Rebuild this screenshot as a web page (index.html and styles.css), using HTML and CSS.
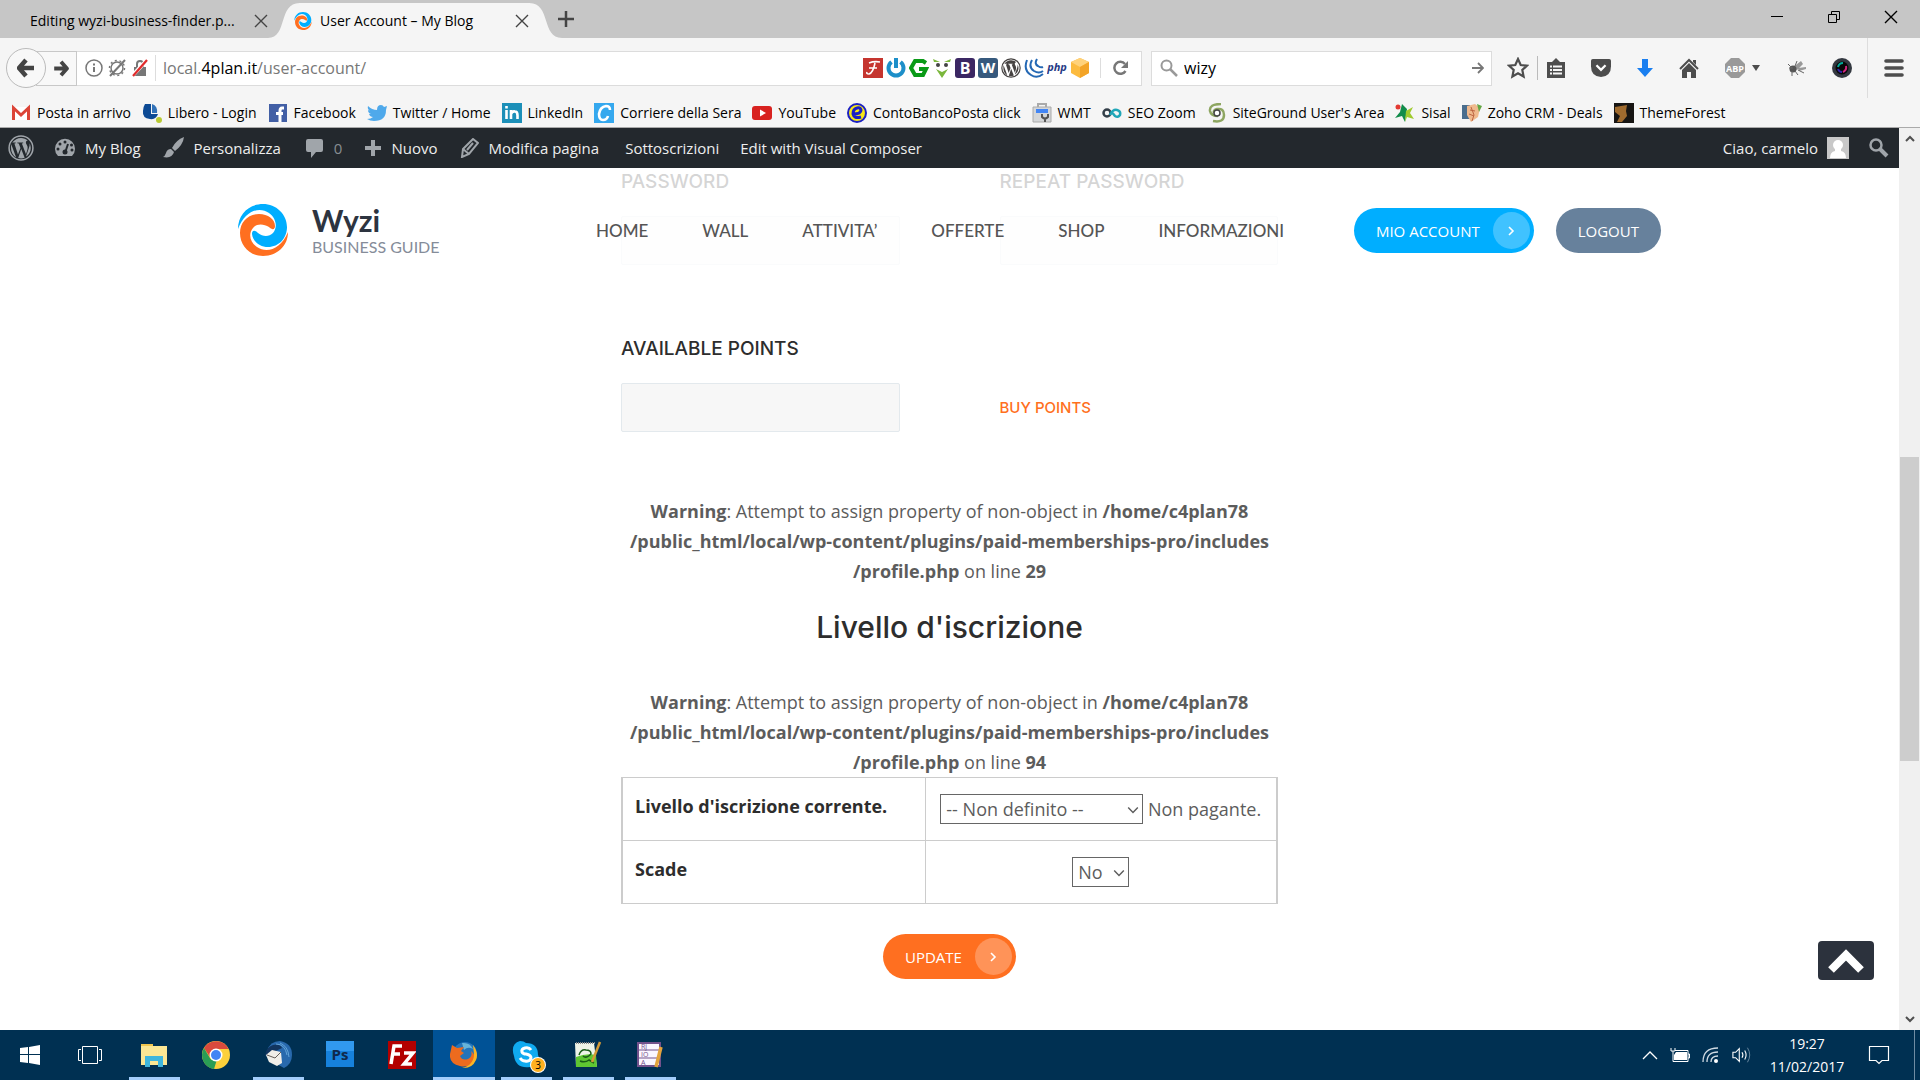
FILE: index.html
```html
<!DOCTYPE html>
<html lang="it">
<head>
    <meta charset="UTF-8">
    <meta name="viewport" content="width=device-width, initial-scale=1.0">
    <title>User Account – My Blog</title>
    <link rel="stylesheet" href="styles.css">
</head>
<body>

    <!-- shared shapes -->
    <svg class="sprites" width="0" height="0" aria-hidden="true">
        <symbol id="swirl" viewBox="0 0 52 52">
            <path fill="#00aeff" d="M1 25C1 10 12 0 26 0c13 0 24 10 24 23 0 11-8 20-19 20-8 0-15-5-16-13 0-4 3-4 6-1 5 4 11 4 15 0 5-6 3-15-4-20C22 2 8 7 1 25z"/>
            <path fill="#ff6f20" d="M51 28c0 14-11 24-25 24C13 52 3 42 3 29c0-11 8-19 19-19 9 0 16 5 16 12 0 4-3 4-6 1-5-3-12-4-16 1-5 6-3 14 4 19 10 7 24 2 31-15z"/>
        </symbol>
        <symbol id="close" viewBox="0 0 14 14"><path d="M1 1l12 12M13 1L1 13" fill="none" stroke="currentColor" stroke-width="1.4"/></symbol>
        <symbol id="chevron" viewBox="0 0 10 10"><path d="M1 3l4 4 4-4" fill="none" stroke="currentColor" stroke-width="1.2"/></symbol>
        <symbol id="arrow" viewBox="0 0 18 20"><path d="M9 2l7 8-7 8M1 10h14" fill="none" stroke="currentColor" stroke-width="4.500" stroke-linejoin="round"/></symbol>
        <symbol id="next" viewBox="0 0 8 10"><path d="M2 1l4 4-4 4" fill="none" stroke="#fff" stroke-width="1.6"/></symbol>
        <symbol id="wp" viewBox="0 0 24 24">
            <circle cx="12" cy="12" r="11" fill="none" stroke="currentColor" stroke-width="1.4"/>
            <path fill="currentColor" d="M3 8.500l4.500 12.300C4.500 19 2.800 15.800 2.800 12c0-1.200.1-2.400.2-3.500zM4 7C6 4.200 8.800 2.700 12 2.700c2.400 0 4.600.9 6.200 2.300-2 .3-2 2.200-.9 4 1.200 2 .9 3.700.3 5.600l-1 3.200L12.800 7.800l1.200-.2V7H8.600v.6l1.300.2 1.600 4.300-2.300 5.800L5.900 7.800l1.200-.2V7zM12.200 13l3.200 8c-2 .8-4.300.8-6 .2zM20 7.500c2 4.600 1 9.500-3.400 12.400l2.700-7.800c.6-1.600.8-3.100.7-4.600z"/>
        </symbol>
    </svg>

    <header class="titlebar">
        <div class="tab">
            <span class="tab-title">Editing wyzi-business-finder.p...</span>
            <button class="plain" aria-label="Chiudi scheda"><svg width="14" height="14"><use href="#close"/></svg></button>
        </div>
        <div class="tab tab-active">
            <svg class="tab-shape" viewBox="0 0 297 35" preserveAspectRatio="none"><path fill="#f5f5f5" d="M0 35C20 35 10 0 32 0H264C286 0 276 35 297 35z"/></svg>
            <svg class="favicon" width="18" height="18"><use href="#swirl"/></svg>
            <span class="tab-title">User Account – My Blog</span>
            <button class="plain" aria-label="Chiudi scheda"><svg width="14" height="14"><use href="#close"/></svg></button>
        </div>
        <button class="plain new-tab" aria-label="Nuova scheda"><svg width="16" height="16" viewBox="0 0 16 16"><path d="M8 0v16M0 8h16" stroke="#444" stroke-width="2.500"/></svg></button>
        <div class="window-controls">
            <button class="plain" aria-label="Riduci"><svg width="14" height="14" viewBox="0 0 14 14"><path d="M1 6.500h12" stroke="#000"/></svg></button>
            <button class="plain" aria-label="Ripristina"><svg width="14" height="14" viewBox="0 0 14 14"><path d="M1.500 4.500h8v8h-8zM4.500 4V1.500h8v8H10" fill="none" stroke="#000"/></svg></button>
            <button class="plain" aria-label="Chiudi"><svg width="14" height="14"><use href="#close"/></svg></button>
        </div>
    </header>

    <div class="navbar">
        <div class="history">
            <button class="plain back" aria-label="Indietro"><svg class="flip" width="18" height="20"><use href="#arrow"/></svg></button>
            <button class="plain forward" aria-label="Avanti"><svg width="16" height="17"><use href="#arrow"/></svg></button>
        </div>
        <div class="urlbar">
            <div class="identity">
                <svg width="18" height="18" viewBox="0 0 18 18"><circle cx="9" cy="9" r="8" fill="none" stroke="#777" stroke-width="1.500"/><path d="M9 8v5M9 4.500v2" stroke="#777" stroke-width="2"/></svg>
                <svg width="18" height="18" viewBox="0 0 18 18"><circle cx="9" cy="9" r="6" fill="none" stroke="#777" stroke-width="1.500"/><circle cx="9" cy="9" r="7.500" fill="none" stroke="#777" stroke-width="1.500" stroke-dasharray="2 2.700"/><path d="M2 17L17 1" stroke="#777" stroke-width="2"/></svg>
                <svg width="18" height="18" viewBox="0 0 18 18"><path fill="#777" d="M3 8h12v9H3z"/><path d="M6 8V5q0-3 3-3t3 3v3" fill="none" stroke="#777" stroke-width="2"/><path d="M2 16L16 1" stroke="#fff" stroke-width="4"/><path d="M2 17L16 1" stroke="#e02c2c" stroke-width="2.200"/></svg>
            </div>
            <p class="url">local.<b>4plan.it</b>/user-account/</p>
            <div class="detected">
                <svg width="20" height="20" viewBox="0 0 20 20"><path fill="#c5352f" d="M0 0h20v20H0z"/><path d="M6 5q5-2 11-1M12 5Q10 15 6 16q-3 0-2-2M6 10h8" fill="none" stroke="#fff" stroke-width="1.600"/></svg>
                <svg width="20" height="20" viewBox="0 0 20 20"><path d="M5.500 4A7.500 7.500 0 1 0 14.500 4M10 0v10" fill="none" stroke="#1d8fc9" stroke-width="4"/></svg>
                <svg width="20" height="20" viewBox="0 0 20 20"><path d="M17 5l-3-2H6L2 10l4 7h8l3-6h-7" fill="none" stroke="#0a9a17" stroke-width="4"/></svg>
                <svg width="20" height="20" viewBox="0 0 20 20"><path fill="#7bb73c" d="M1 1l7 3H2zM19 1l-7 3h6zM4 11l6 3 6-3-6 9z"/><circle cx="6" cy="7" r="2" fill="#444"/><circle cx="14" cy="7" r="2" fill="#444"/></svg>
                <svg width="20" height="20" viewBox="0 0 20 20"><rect width="20" height="20" rx="3" fill="#3b2763"/><text x="10" y="16" text-anchor="middle" font-size="16" font-weight="700" fill="#fff">B</text></svg>
                <svg width="20" height="20" viewBox="0 0 20 20"><rect width="20" height="20" rx="3" fill="#36597d"/><text x="10" y="15" text-anchor="middle" font-size="15" font-weight="700" fill="#fff">W</text></svg>
                <svg class="wp-dark" width="20" height="20"><use href="#wp"/></svg>
                <svg width="20" height="20" viewBox="0 0 20 20"><path d="M3 2Q-1 12 7 17q6 4 12-1M8 2q-4 7 2 11 5 3 9 0M13 1q-3 5 1 7 3 2 5 1" fill="none" stroke="#2468b4" stroke-width="2"/></svg>
                <svg width="20" height="20" viewBox="0 0 20 20"><text x="10" y="13" text-anchor="middle" font-size="11" font-weight="700" font-style="italic" fill="#283a85">php</text></svg>
                <svg width="20" height="20" viewBox="0 0 20 20"><path fill="#fcbb3f" d="M10 0l9 4v11l-9 5-9-5V4z"/><path fill="#ffd27a" d="M10 0l9 4-9 5-9-5z"/><path fill="#f3a427" d="M10 9l9-5v11l-9 5z"/></svg>
            </div>
            <button class="plain reload" aria-label="Ricarica"><svg width="16" height="16" viewBox="0 0 16 16"><path d="M12.500 11A6 6 0 1 1 12 4" fill="none" stroke="#777" stroke-width="2.500"/><path fill="#777" d="M15 1v7H8z"/></svg></button>
        </div>
        <label class="searchbox">
            <svg width="18" height="18" viewBox="0 0 18 18"><circle cx="6.500" cy="6.500" r="5" fill="none" stroke="#999" stroke-width="2"/><path d="M10 10l7 7" stroke="#999" stroke-width="2.500"/></svg>
            <input type="text" value="wizy" aria-label="Cerca">
            <svg width="12" height="12" viewBox="0 0 12 12"><path d="M0 6h11M6 1l5 5-5 5" fill="none" stroke="#777" stroke-width="1.800"/></svg>
        </label>
        <div class="tools">
            <svg width="22" height="22" viewBox="0 0 22 22"><path d="M11 2l2.700 6 6.300.7-4.700 4.300 1.300 6.500L11 16.200l-5.600 3.300L6.700 13 2 8.700 8.300 8z" fill="none" stroke="#4d4d4d" stroke-width="2.200"/></svg>
            <i class="separator"></i>
            <svg width="20" height="20" viewBox="0 0 20 20"><path fill="#4d4d4d" d="M1 4h5l4-4 4 4h5v16H1z"/><path d="M4 8.500h12M4 12h12M4 15.500h12" stroke="#f5f5f5" stroke-width="2"/><path d="M6.500 7v11" stroke="#4d4d4d"/></svg>
            <svg width="20" height="20" viewBox="0 0 22 20"><path fill="#4d4d4d" d="M2 0h18q2 0 2 2v6q0 11-11 12Q0 19 0 8V2q0-2 2-2z"/><path d="M6 7l5 5 5-5" fill="none" stroke="#fff" stroke-width="2.500"/></svg>
            <svg width="18" height="20" viewBox="0 0 18 20"><path fill="#1a7ff0" d="M6 1h6v9h5l-8 9-8-9h5z"/></svg>
            <svg width="20" height="20" viewBox="0 0 20 20"><path d="M1 11l9-9 9 9" fill="none" stroke="#4d4d4d" stroke-width="2"/><path fill="#4d4d4d" d="M3 12l7-7 7 7v8h-5v-6H8v6H3zM14 2h3v5l-3-3z"/></svg>
            <div class="abp">
                <svg width="22" height="22" viewBox="0 0 22 22"><path fill="#999" d="M7 1h8l6 6v8l-6 6H7l-6-6V7z"/><text x="11" y="15" text-anchor="middle" font-size="9" font-weight="700" fill="#fff">ABP</text></svg>
                <svg width="8" height="6" viewBox="0 0 8 6"><path fill="#4d4d4d" d="M0 0h8L4 6z"/></svg>
            </div>
            <svg width="20" height="18" viewBox="0 0 20 18"><path fill="#999" d="M5 9l9-7 2 3-6 6zM11 9l8-1v2l-7 2z"/><circle cx="6" cy="10" r="3.500" fill="#555"/><path d="M1 5l4 4M5 12v5M8 12l3 4M2 9h4M11 11l6 3M8 7l2-5" stroke="#666"/></svg>
            <svg width="20" height="20" viewBox="0 0 20 20"><circle cx="10" cy="10" r="10" fill="#333840"/><circle cx="10" cy="10" r="6.500" fill="#080808"/><path d="M6 9q1-4 5-4" fill="none" stroke="#0a9" stroke-width="2"/><path d="M14 8q1 4-3 6" fill="none" stroke="#d3267e" stroke-width="2"/><path d="M6 11q1 3 4 3" fill="none" stroke="#32a" stroke-width="2"/></svg>
        </div>
        <button class="plain menu" aria-label="Menu"><svg width="20" height="18" viewBox="0 0 20 18"><path d="M2 2h16M2 9h16M2 16h16" stroke="#4d4d4d" stroke-width="3.600" stroke-linecap="round"/></svg></button>
    </div>

    <nav class="bookmarks" aria-label="Segnalibri">
        <a href="#"><svg viewBox="0 0 20 20"><path fill="#fff" d="M1 4h18v13H1z"/><path d="M2.500 17V5l7.500 7 7.500-7v12" fill="none" stroke="#dc4437" stroke-width="3"/></svg>Posta in arrivo</a>
        <a href="#"><svg viewBox="0 0 20 20"><path fill="#0d4a94" d="M3 1h6v10h7q-2 6-8 5Q0 15 1 8 1 4 3 1z"/><path fill="#3272b8" d="M10 1q6 2 5 9h-5z"/><circle cx="17" cy="17" r="3" fill="#b9ca32"/></svg>Libero - Login</a>
        <a href="#"><svg viewBox="0 0 20 20"><path fill="#425fa5" d="M1 1h18v18H1z"/><path d="M16 5h-2q-2 0-2 3v11M8 10.500h7" fill="none" stroke="#fff" stroke-width="3"/></svg>Facebook</a>
        <a href="#"><svg viewBox="0 0 20 20"><path fill="#4fa9eb" d="M1 3q4 4 9 4 0-5 4-5 2 0 3 2l3-1-1 4q0 11-12 11-4 0-7-2 4 0 6-2-3 0-4-3h2Q1 10 1 7l2 1Q0 6 1 3z"/></svg>Twitter / Home</a>
        <a href="#"><svg viewBox="0 0 20 20"><path fill="#1c8fb8" d="M0 0h20v20H0z"/><path d="M4.500 7v9M4.500 3v2.500M9 16V7M9 11q1-3 4-2.500 2.500 0 2.500 4V16" fill="none" stroke="#fff" stroke-width="2.600"/></svg>LinkedIn</a>
        <a href="#"><svg viewBox="0 0 20 20"><path fill="#35a8ee" d="M0 0h20v20H0z"/><path d="M16 7q0-4-4-4-6 1-7 8 0 6 4 6 4 0 5-4" fill="none" stroke="#fff" stroke-width="2.600"/></svg>Corriere della Sera</a>
        <a href="#"><svg viewBox="0 0 20 20"><rect y="3" width="20" height="14" rx="3" fill="#d8221f"/><path fill="#fff" d="M8 6.500v7l6-3.500z"/></svg>YouTube</a>
        <a href="#"><svg viewBox="0 0 20 20"><circle cx="10" cy="10" r="9" fill="#f6e619" stroke="#1b20c5" stroke-width="2"/><path d="M6 11q8 0 8-4-1-3-4-2-4 1-4 6 1 5 8 3" fill="none" stroke="#1b20c5" stroke-width="3"/></svg>ContoBancoPosta click</a>
        <a href="#"><svg viewBox="0 0 20 20"><path d="M6 5V1h8v4" fill="none" stroke="#aaa" stroke-width="2"/><path fill="#d4d6d8" stroke="#aaa" d="M1 4h18v15H1z"/><path fill="#4285f4" d="M4 6h12v4H4z"/><path d="M10 11v3q3 3 6 0v-3M13 15v4" fill="none" stroke="#555" stroke-width="2"/></svg>WMT</a>
        <a href="#"><svg viewBox="0 0 20 20"><circle cx="5" cy="10" r="3.500" fill="none" stroke="#333e48" stroke-width="2.500"/><path d="M8 12q3-6 7-5 4 1 3 5-2 3-5 1l-4-5" fill="none" stroke="#20a6b8" stroke-width="2.500"/></svg>SEO Zoom</a>
        <a href="#"><svg viewBox="0 0 20 20"><path d="M14 1Q2 1 3 8q1 5 8 5M6 18q11 2 11-6 0-7-7-6-4 1-3 4" fill="none" stroke="#8ea661" stroke-width="2.500"/><circle cx="10" cy="10" r="3" fill="#fff" stroke="#444" stroke-width="1.500"/></svg>SiteGround User's Area</a>
        <a href="#"><svg viewBox="0 0 20 20"><circle cx="3" cy="4" r="2.500" fill="#e33a32"/><path fill="#118c4a" d="M7 1l5 5-2 13-3-6-7 2 5-6z"/><path fill="#9fca2d" d="M11 8l7-4-3 6 4 6-7-2-2 5z"/></svg>Sisal</a>
        <a href="#"><svg viewBox="0 0 20 20"><path fill="#4a6d8d" d="M0 2h8v14H0z"/><path fill="#efb98d" d="M5 3l8-2 5 4-2 9-7 5-4-7z"/><path fill="#64a744" d="M15 1l5 2-3 6z"/><path d="M8 7l5 1M7 11l5 2M9 4l3 8-2 6" stroke="#bd6340" fill="none"/></svg>Zoho CRM - Deals</a>
        <a href="#"><svg viewBox="0 0 20 20"><path fill="#171513" d="M0 0h20v20H0z"/><path fill="#a06b2e" d="M1 4l12-2-1 6 1 5-5 6H3l3-6-5-4z"/></svg>ThemeForest</a>
    </nav>

    <div class="viewport">
        <div class="page">
            <nav class="adminbar" aria-label="Barra degli strumenti">
                <a class="wp-logo" href="#" aria-label="WordPress"><svg width="26" height="26"><use href="#wp"/></svg></a>
                <a href="#"><svg width="22" height="20" viewBox="0 0 22 20"><path fill="currentColor" d="M4 18A10 10 0 1 1 18 18z"/><path d="M11 15l3-9" stroke="#23282d" stroke-width="2"/><circle cx="11" cy="14" r="2.500" fill="#23282d"/><g fill="#23282d"><circle cx="4" cy="11" r="1.500"/><circle cx="6" cy="6" r="1.500"/><circle cx="11" cy="4" r="1.500"/><circle cx="17.500" cy="7" r="1.500"/><circle cx="18" cy="12" r="1.500"/></g></svg>My Blog</a>
                <a href="#"><svg width="22" height="22" viewBox="0 0 22 22"><path fill="currentColor" d="M21 0Q13 3 9 11l3 3Q20 8 21 0zM8 12q-4 0-5 4-1 3-3 4 9 2 11-5z"/></svg>Personalizza</a>
                <a class="count" href="#"><svg width="20" height="20" viewBox="0 0 20 20"><path fill="currentColor" d="M3 1h13q2 0 2 2v9q0 2-2 2h-5l-5 6v-6H3q-2 0-2-2V3q0-2 2-2z"/></svg>0</a>
                <a href="#"><svg width="18" height="18" viewBox="0 0 18 18"><path d="M9 1v16M1 9h16" stroke="currentColor" stroke-width="4"/></svg>Nuovo</a>
                <a href="#"><svg width="20" height="20" viewBox="0 0 20 20"><path fill="none" stroke="currentColor" stroke-width="2" d="M14 1l5 4-9 11-7 3 1-8zM4 11l6 5M8 12l6-7"/></svg>Modifica pagina</a>
                <a class="text-link" href="#">Sottoscrizioni</a>
                <a class="text-link" href="#">Edit with Visual Composer</a>
                <div class="account">
                    <a href="#">Ciao, carmelo<svg width="22" height="22" viewBox="0 0 22 22"><path fill="#c8c8c8" d="M0 0h22v22H0z"/><circle cx="11" cy="8" r="5" fill="#fff"/><path fill="#fff" d="M8 11h6v3q5 1 5 7H3q0-6 5-7z"/></svg></a>
                    <a href="#" aria-label="Cerca"><svg width="20" height="20" viewBox="0 0 20 20"><circle cx="7" cy="7" r="5.500" fill="none" stroke="currentColor" stroke-width="2.500"/><path d="M11 11l7 7" stroke="currentColor" stroke-width="4"/></svg></a>
                </div>
            </nav>

            <main class="content">
                <header class="site-header">
                    <a class="logo" href="#">
                        <svg width="52" height="52"><use href="#swirl"/></svg>
                        <span class="logo-text"><strong>Wyzi</strong><small>BUSINESS GUIDE</small></span>
                    </a>
                    <nav class="main-menu" aria-label="Menu principale">
                        <a href="#">HOME</a>
                        <a href="#">WALL</a>
                        <a href="#">ATTIVITA’</a>
                        <a href="#">OFFERTE</a>
                        <a href="#">SHOP</a>
                        <a href="#">INFORMAZIONI</a>
                    </nav>
                    <div class="header-buttons">
                        <a class="pill pill-blue pill-arrow" href="#">MIO ACCOUNT<span><svg width="8" height="10"><use href="#next"/></svg></span></a>
                        <a class="pill pill-grey" href="#">LOGOUT</a>
                    </div>
                </header>

                <form class="profile">
                    <div class="fields">
                        <div class="field">
                            <label for="password">PASSWORD</label>
                            <input type="password" id="password">
                        </div>
                        <div class="field">
                            <label for="repeat">REPEAT PASSWORD</label>
                            <input type="password" id="repeat">
                        </div>
                        <div class="field">
                            <label for="points">AVAILABLE POINTS</label>
                            <input type="text" id="points" readonly>
                        </div>
                        <a class="buy" href="#">BUY POINTS</a>
                    </div>

                    <p class="warning"><b>Warning</b>: Attempt to assign property of non-object in <b>/home/c4plan78<wbr>/public_html/local/wp-content/plugins/paid-memberships-pro/includes<wbr>/profile.php</b> on line <b>29</b></p>

                    <h2>Livello d'iscrizione</h2>

                    <p class="warning"><b>Warning</b>: Attempt to assign property of non-object in <b>/home/c4plan78<wbr>/public_html/local/wp-content/plugins/paid-memberships-pro/includes<wbr>/profile.php</b> on line <b>94</b></p>

                    <table>
                        <tr>
                            <th><label for="level">Livello d'iscrizione corrente.</label></th>
                            <td>
                                <span class="select level"><select id="level"><option>-- Non definito --</option></select><svg width="12" height="12"><use href="#chevron"/></svg></span>
                                Non pagante.
                            </td>
                        </tr>
                        <tr>
                            <th><label for="expires">Scade</label></th>
                            <td><span class="select expires"><select id="expires"><option>No</option></select><svg width="12" height="12"><use href="#chevron"/></svg></span></td>
                        </tr>
                    </table>

                    <button class="pill pill-orange pill-arrow" type="submit">UPDATE<span><svg width="8" height="10"><use href="#next"/></svg></span></button>
                </form>

                <a class="to-top" href="#" aria-label="Torna su"><svg width="36" height="24" viewBox="0 0 36 24"><path d="M3 21L18 6l15 15" fill="none" stroke="#fff" stroke-width="8"/></svg></a>
            </main>
        </div>
        <div class="scrollbar">
            <svg width="12" height="12" viewBox="0 0 12 12"><path d="M2 8l4-4 4 4" fill="none" stroke="#505050" stroke-width="2"/></svg>
            <div class="track"><div class="thumb"></div></div>
            <svg width="12" height="12" viewBox="0 0 12 12"><path d="M2 4l4 4 4-4" fill="none" stroke="#505050" stroke-width="2"/></svg>
        </div>
    </div>

    <footer class="taskbar">
        <button class="plain start" aria-label="Start"><svg width="20" height="20" viewBox="0 0 20 20"><path fill="#fff" d="M0 3l8-1v7H0zM9 2l11-2v9H9zM0 10h8v8l-8-1zM9 10h11v10L9 18z"/></svg></button>
        <button class="plain start" aria-label="Visualizzazione attività"><svg width="26" height="20" viewBox="0 0 26 20"><path d="M5.500 1.500h15v17h-15zM4 4.500H1.500v11H4M22 4.500h2.500v11H22" fill="none" stroke="#fff"/></svg></button>
        <div class="tasks">
            <button class="plain task running" aria-label="Esplora file"><svg viewBox="0 0 28 28"><path fill="#f0c64f" d="M1 3h12v4H1z"/><path fill="#fce794" d="M1 5h26v19H1z"/><path fill="#3fb6dd" d="M5 15h18v11h-5v-6h-8v6H5z"/></svg></button>
            <button class="plain task" aria-label="Chrome"><svg viewBox="0 0 28 28"><circle cx="14" cy="14" r="14" fill="#fcd03b"/><path fill="#d94a3d" d="M2 7a14 14 0 0 1 24.500 1H14l-6 8z"/><path fill="#2a9d55" d="M2 7l6.500 11 6 2L12 28A14 14 0 0 1 2 7z"/><circle cx="14" cy="14" r="6.500" fill="#fff"/><circle cx="14" cy="14" r="5" fill="#4285f4"/></svg></button>
            <button class="plain task running" aria-label="Thunderbird"><svg viewBox="0 0 28 28"><path fill="#2869ad" d="M3 10Q6 0 16 0q12 2 12 14 0 9-8 13l-9-5-9-7z"/><path fill="#12355f" d="M1 15Q2 6 9 4q7-2 9 3z"/><path fill="#f0eee8" d="M2 14l6-5 9 2 1 11-5 3-8-4z"/><path d="M3 14l8 3 6-6" fill="none" stroke="#665f59"/><path d="M12 3q9 0 11 11M16 2q8 3 9 14" fill="none" stroke="#63a4d8"/></svg></button>
            <button class="plain task" aria-label="Photoshop"><svg viewBox="0 0 28 28"><path fill="#1681dc" d="M0 0h28v26H0z"/><path fill="#3199ef" d="M0 0h28v10H0z"/><text x="14" y="19" text-anchor="middle" font-size="15" font-weight="700" fill="#10294b">Ps</text></svg></button>
            <button class="plain task" aria-label="FileZilla"><svg viewBox="0 0 28 28"><path fill="#b30000" d="M0 0h28v28H0z"/><path d="M14 5H6L3 23M5 13h7M16 12h9l-9 11h8" fill="none" stroke="#fff" stroke-width="3.500"/></svg></button>
            <button class="plain task active" aria-label="Firefox"><svg viewBox="0 0 28 28"><circle cx="15" cy="13" r="12" fill="#2374ba"/><path fill="#67b4d9" d="M12 2q8-1 11 6-5-3-9 1z"/><path fill="#ed6b1e" d="M2 4l5 3 7-1-3 4 3 2-4 3q2 5 8 3 5-3 3-8 6 5 2 11-5 6-13 4Q-1 23 0 13z"/><path fill="#fbb523" d="M23 4q6 8 3 15-4 9-14 8 12-3 12-14z"/></svg></button>
            <button class="plain task running skype" aria-label="Skype"><svg viewBox="0 0 28 28"><path fill="#10aaf0" d="M8 0q4 0 6 2 12 0 12 12 2 4 1 8-3 6-9 4Q4 28 2 15-2 3 8 0z"/><path d="M19 9q-2-3-6-2-4 1-3 4 1 2 4 2 5 1 5 4-1 4-6 3-3 0-5-3" fill="none" stroke="#fff" stroke-width="3"/></svg><span class="badge">3</span></button>
            <button class="plain task running" aria-label="Notepad++"><svg viewBox="0 0 28 28"><path fill="#eef4e8" d="M1 2h19l3 24H2z"/><path fill="#5fc732" d="M2 16q10-4 20-2l1 12H2z"/><path d="M2 2h19" stroke="#888" stroke-width="2" stroke-dasharray="1 1"/><path d="M5 14q2-6 7-5 5 0 5 4-5 5-8 2M6 20q5 2 9-1l5 3" fill="none" stroke="#195c18" stroke-width="1.500"/><path d="M26 1l-8 20" stroke="#d49b37" stroke-width="2.500"/></svg></button>
            <button class="plain task running" aria-label="Editor"><svg viewBox="0 0 28 28"><path fill="#faf6ff" stroke="#73528c" stroke-width="2" d="M2 2h22v23H2z"/><path d="M2 9h22M2 17h22" stroke="#73528c"/><g fill="#73528c" font-size="7"><text x="5" y="8">Rj</text><text x="5" y="16">IO</text><text x="5" y="24">A</text></g><path d="M25 6l-5 20" stroke="#e3a33c" stroke-width="3.500"/></svg></button>
        </div>

        <div class="tray">
            <svg width="16" height="10" viewBox="0 0 16 10"><path d="M1 9l7-7 7 7" fill="none" stroke="#fff" stroke-width="1.300"/></svg>
            <svg width="20" height="16" viewBox="0 0 20 16"><path fill="#fff" d="M6 5h11v8H4V8z"/><path d="M5 3.500h13v11H3V9M18 7h1.500v4H18M1 1v3h4V1M3 4v5" fill="none" stroke="#fff"/></svg>
            <svg width="18" height="18" viewBox="0 0 18 18"><path d="M1 16Q1 2 16 2M5 16Q5 6 16 6M9 16q0-6 7-6" fill="none" stroke="#cfdae3" stroke-width="1.300"/><circle cx="14" cy="15" r="2" fill="#fff"/></svg>
            <svg width="20" height="18" viewBox="0 0 22 18"><path d="M1 6h3l4-4v14l-4-4H1zM11 6q2 3 0 6M14 4q3 5 0 10" fill="none" stroke="#fff" stroke-width="1.200"/><path d="M17 1q5 8 0 16" fill="none" stroke="#6f8ca3"/></svg>
            <time class="clock" datetime="2017-02-11T19:27"><span>19:27</span><span>11/02/2017</span></time>
            <svg width="22" height="22" viewBox="0 0 22 22"><path d="M1.500 2.500h19v14H14l-3 3-3-3H1.500z" fill="none" stroke="#fff" stroke-width="1.200"/></svg>
            <i class="show-desktop"></i>
        </div>
    </footer>

</body>
</html>
```
FILE: styles.css
```css
* {
    box-sizing: border-box;
}
body {
    margin: 0;
    min-height: 100vh;
    display: flex;
    flex-direction: column;
    font-family: "Open Sans", sans-serif;
    font-size: 14px;
    color: #000;
    background: #fff;
}
p, h2 {
    margin: 0;
}
a {
    color: inherit;
    text-decoration: none;
}
svg {
    flex: none;
}
.sprites {
    position: absolute;
}
.plain {
    display: flex;
    align-items: center;
    justify-content: center;
    padding: 0;
    border: none;
    background: none;
    color: #444;
    font: inherit;
}

/* browser tabs */
.titlebar {
    display: flex;
    height: 38px;
    background: #c6c6c6;
}
.tab {
    display: flex;
    align-items: center;
    width: 268px;
    height: 35px;
    margin-top: 3px;
    padding-left: 30px;
}
.tab-title {
    flex: 1;
    position: relative;
    white-space: nowrap;
}
.tab-active {
    position: relative;
    width: 294px;
    padding: 0 33px 0 26px;
}
.tab-shape {
    position: absolute;
    left: 0;
    top: 0;
    width: 100%;
    height: 100%;
}
.tab-active .plain,
.favicon {
    position: relative;
}
.favicon {
    margin-right: 8px;
}
.new-tab {
    width: 8px;
    overflow: visible;
}
.window-controls {
    display: flex;
    gap: 43px;
    height: 34px;
    margin-left: auto;
    padding-right: 22px;
}
.window-controls .plain {
    color: #000;
}

/* address bar */
.navbar {
    display: flex;
    align-items: center;
    height: 60px;
    background: #f5f5f5;
    padding-left: 6px;
}
.history {
    display: flex;
    align-items: center;
}
.back {
    width: 40px;
    height: 40px;
    border: 1px solid #bbb;
    border-radius: 50%;
    background: #f8f8f8;
    z-index: 1;
}
.flip {
    transform: scaleX(-1);
}
.forward {
    width: 41px;
    height: 35px;
    margin-left: -10px;
    padding-left: 8px;
    border: 1px solid #c8c8c8;
    background: #f8f8f8;
}
.urlbar,
.searchbox {
    display: flex;
    align-items: center;
    height: 35px;
    background: #fff;
    border: 1px solid #dcdcdc;
}
.urlbar {
    flex: 1;
    border-left: none;
}
.identity {
    display: flex;
    gap: 5px;
    padding: 4px 6px 4px 8px;
    border-right: 1px solid #ddd;
}
.url {
    flex: 1;
    padding-left: 7px;
    font-size: 16px;
    color: #777;
}
.url b {
    font-weight: 400;
    color: #000;
}
.detected {
    display: flex;
    gap: 3px;
    padding-right: 10px;
    border-right: 1px solid #ddd;
}
.wp-dark {
    color: #464342;
}
.reload {
    width: 40px;
}
.searchbox {
    width: 341px;
    margin-left: 9px;
    padding: 0 7px 0 8px;
}
.searchbox input {
    flex: 1;
    min-width: 0;
    padding: 0 6px;
    border: none;
    font: 16px "Open Sans", sans-serif;
}
.tools {
    display: flex;
    align-items: center;
    gap: 25px;
    height: 100%;
    padding: 0 15px;
}
.separator {
    width: 1px;
    height: 24px;
    margin: 0 -17px;
    background: #bbb;
}
.abp {
    display: flex;
    align-items: center;
    gap: 6px;
    margin-right: 2px;
}
.menu {
    align-self: stretch;
    width: 53px;
    border-left: 1px solid #ddd;
}

/* bookmarks */
.bookmarks {
    display: flex;
    align-items: center;
    gap: 11px;
    height: 30px;
    padding: 0 11px;
    background: #f5f5f5;
    border-bottom: 1px solid #aaa;
}
.bookmarks a {
    display: flex;
    align-items: center;
    gap: 6px;
    white-space: nowrap;
}
.bookmarks svg {
    width: 20px;
    height: 20px;
}

.viewport {
    flex: 1;
    display: flex;
}
.page {
    flex: 1;
    display: flex;
    flex-direction: column;
}

/* wordpress admin bar */
.adminbar {
    display: flex;
    align-items: center;
    height: 40px;
    padding: 0 10px 0 8px;
    gap: 22px;
    background: #23282d;
    color: #eee;
    font-size: 15px;
}
.adminbar a {
    display: flex;
    align-items: center;
    gap: 9px;
    white-space: nowrap;
}
.adminbar svg {
    color: #a0a5aa;
}
.adminbar .wp-logo {
    margin-right: -2px;
}
.adminbar .count {
    margin-left: 2px;
    color: #888d92;
}
.adminbar .text-link {
    margin: 0 -5px 0 4px;
}
.account {
    display: flex;
    gap: 20px;
    margin-left: auto;
}

.content {
    flex: 1;
    position: relative;
}
.site-header {
    position: absolute;
    inset: 0 0 auto 0;
    display: flex;
    align-items: center;
    height: 125px;
    padding: 0 238px 0 237px;
    background: rgba(255, 255, 255, 0.8);
}
.logo {
    display: flex;
    gap: 23px;
    width: 359px;
    font-family: Lato, sans-serif;
}
.logo-text {
    display: flex;
    flex-direction: column;
    color: #2d3440;
}
.logo strong {
    font-size: 30px;
    line-height: 32px;
}
.logo small {
    font-size: 16px;
    line-height: 22px;
    color: #858c99;
}
.main-menu {
    display: flex;
    gap: 54px;
    font-family: Lato, sans-serif;
    font-size: 17px;
    font-weight: 500;
    color: #555;
}
.header-buttons {
    display: flex;
    gap: 22px;
    margin-left: auto;
}
.pill {
    display: flex;
    align-items: center;
    height: 45px;
    padding: 0 22px;
    border: none;
    border-radius: 23px;
    font: 15px "Open Sans", sans-serif;
    color: #fff;
    white-space: nowrap;
}
.pill-arrow {
    padding-right: 4px;
}
.pill span {
    display: flex;
    align-items: center;
    justify-content: center;
    width: 37px;
    height: 37px;
    margin-left: 13px;
    border-radius: 50%;
    background: rgba(255, 255, 255, 0.25);
}
.pill-blue {
    background: #00aeff;
}
.pill-grey {
    background: #67819c;
}
.pill-orange {
    background: #ff6f20;
}

/* profile form */
.profile {
    width: 657px;
    margin: 0 auto;
    padding-top: 2px;
    font-size: 18px;
    color: #5c5c5c;
}
.fields {
    display: grid;
    grid-template-columns: 1fr 1fr;
    gap: 72px 100px;
}
.field {
    font-family: Inter, sans-serif;
}
.field label {
    display: block;
    margin-bottom: 22px;
    line-height: 24px;
    font-size: 19px;
    font-weight: 500;
    color: #2d2d2d;
}
.field input {
    display: block;
    width: 100%;
    height: 49px;
    border: 1px solid #e3e9ed;
    border-radius: 2px;
    background: #f7f7f7;
}
.buy {
    align-self: end;
    font-family: Inter, sans-serif;
    font-size: 15px;
    font-weight: 500;
    line-height: 49px;
    color: #ff6f20;
}
.warning {
    line-height: 30px;
    text-align: center;
}
.fields + .warning {
    margin-top: 64px;
}
h2 {
    margin: 21px 0 40px;
    line-height: 40px;
    font-family: Inter, sans-serif;
    font-size: 30px;
    font-weight: 500;
    text-align: center;
    color: #2d2d2d;
}
table {
    width: 100%;
    border-collapse: collapse;
    border: 1px solid #ccc;
    border-width: 1px 2px;
}
th, td {
    height: 63px;
    padding: 0 12px;
    border: 1px solid #ccc;
    white-space: nowrap;
}
th {
    width: 303px;
    padding-bottom: 6px;
    text-align: left;
    color: #2d2d2d;
}
td {
    text-align: center;
}
.select {
    position: relative;
    display: inline-block;
}
.select svg {
    position: absolute;
    right: 4px;
    top: 10px;
}
select {
    appearance: none;
    width: 100%;
    height: 30px;
    padding: 0 5px;
    border: 1px solid #666;
    border-radius: 0;
    background: #fff;
    color: inherit;
    font: inherit;
    line-height: 28px;
}
.level {
    width: 203px;
}
.expires {
    width: 57px;
}
.profile .pill {
    margin: 30px auto 0;
}
.to-top {
    position: absolute;
    right: 25px;
    bottom: 50px;
    display: flex;
    align-items: center;
    justify-content: center;
    width: 56px;
    height: 39px;
    border-radius: 4px;
    background: #2c323d;
}

.scrollbar {
    display: flex;
    flex-direction: column;
    align-items: center;
    width: 21px;
    padding: 5px 0;
    background: #f0f0f0;
}
.track {
    flex: 1;
    width: 19px;
    display: flex;
    flex-direction: column;
}
.track::before {
    content: "";
    flex: 36;
}
.thumb {
    flex: 35;
    background: #cdcdcd;
}
.track::after {
    content: "";
    flex: 29;
}

/* taskbar */
.taskbar {
    display: flex;
    height: 50px;
    background: #003052;
    color: #fff;
}
.start {
    width: 60px;
}
.tasks {
    display: flex;
    margin-left: 3px;
}
.task {
    position: relative;
    width: 62px;
    padding: 0 5px;
}
.task svg {
    width: 28px;
    height: 28px;
}
.running::after {
    content: "";
    position: absolute;
    inset: auto 5px 0 6px;
    height: 3px;
    background: #a3cdfb;
}
.active {
    background: #005296;
    box-shadow: inset 0 -3px #a3cdfb;
}
.badge {
    position: absolute;
    right: 12px;
    bottom: 8px;
    width: 14px;
    height: 14px;
    border-radius: 50%;
    background: #ffb01f;
    box-shadow: 0 0 0 1px #fff;
    color: #000;
    font-size: 10px;
    line-height: 14px;
}
.tray {
    display: flex;
    align-items: center;
    gap: 12px;
    margin-left: auto;
}
.clock {
    display: flex;
    flex-direction: column;
    width: 86px;
    margin-right: 6px;
    text-align: center;
    line-height: 23px;
}
.show-desktop {
    width: 6px;
    height: 50px;
    margin-left: 12px;
    border-left: 1px solid #6f8ca3;
}
```
